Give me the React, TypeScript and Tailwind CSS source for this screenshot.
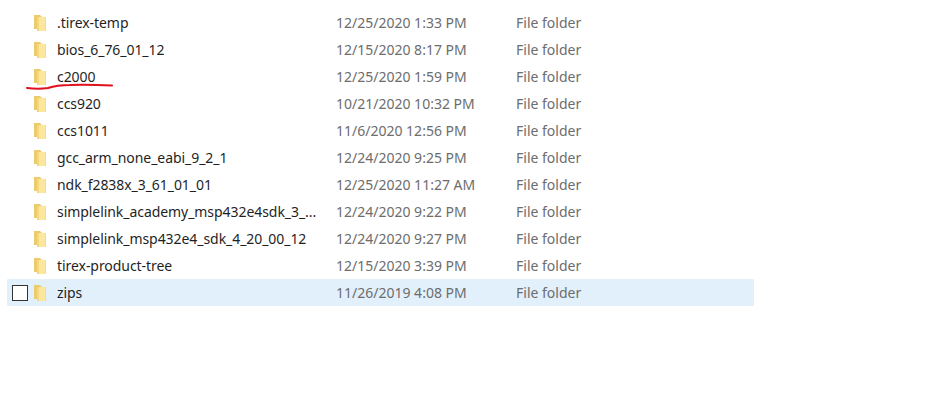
const rows = [
  { name: '.tirex-temp', date: '12/25/2020 1:33 PM' },
  { name: 'bios_6_76_01_12', date: '12/15/2020 8:17 PM' },
  { name: 'c2000', date: '12/25/2020 1:59 PM' },
  { name: 'ccs920', date: '10/21/2020 10:32 PM' },
  { name: 'ccs1011', date: '11/6/2020 12:56 PM' },
  { name: 'gcc_arm_none_eabi_9_2_1', date: '12/24/2020 9:25 PM' },
  { name: 'ndk_f2838x_3_61_01_01', date: '12/25/2020 11:27 AM' },
  { name: 'simplelink_academy_msp432e4sdk_3_...', date: '12/24/2020 9:22 PM' },
  { name: 'simplelink_msp432e4_sdk_4_20_00_12', date: '12/24/2020 9:27 PM' },
  { name: 'tirex-product-tree', date: '12/15/2020 3:39 PM' },
  { name: 'zips', date: '11/26/2019 4:08 PM', hover: true },
];

function FolderIcon() {
  return (
    <svg width="14" height="18" viewBox="0 0 14 18" className="shrink-0">
      <path d="M0 1 L6 1 L8 3 L8 15 L0 15 Z" fill="#eccb6c" />
      <path d="M3 3 L12 3 L12 17 L3 17 Z" fill="#fce79f" />
      <path d="M3 3 L5 3 L5 17 L3 17 Z" fill="#f3d67e" />
      <path d="M11 3 L12 3 L12 17 L11 17 Z" fill="#f7dc8a" />
    </svg>
  );
}

export default function App() {
  return (
    <div className="relative h-[418px] w-[935px] bg-white pt-[9px] pl-[7px] font-['Noto_Sans',sans-serif] text-[14px]">
      {rows.map(row => (
        <div
          key={row.name}
          className={`flex h-[27px] w-[747px] items-center rounded-[1px] ${row.hover ? 'bg-[#e2f0fc]' : ''}`}
        >
          <div className="flex w-[27px] shrink-0 justify-end pr-[6px]">
            {row.hover && <div className="h-[16px] w-[16px] border border-[#333333] bg-white" />}
          </div>
          <FolderIcon />
          <span className="ml-[9px] w-[279px] shrink-0 truncate tracking-[-0.06px] text-[#1f1f1f]">{row.name}</span>
          <span className="w-[180px] shrink-0 text-[#6d6d6d]">{row.date}</span>
          <span className="text-[#6d6d6d]">File folder</span>
        </div>
      ))}
      <svg className="absolute top-[80px] left-[24px]" width="92" height="12" viewBox="0 0 92 12">
        <path
          d="M3 8 C10 9 18 9 24 8 C30 6 34 5 46 5 C62 4.6 76 5 88 5.4"
          fill="none"
          stroke="#e0101c"
          strokeWidth="2"
          strokeLinecap="round"
        />
      </svg>
    </div>
  );
}
